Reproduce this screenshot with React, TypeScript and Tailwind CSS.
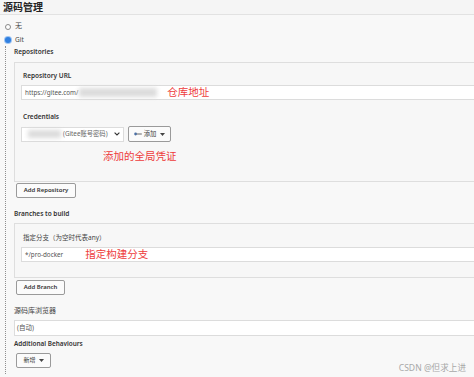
import React from "react";

function Chevron() {
  return (
    <svg width="6" height="4" viewBox="0 0 6 4" className="shrink-0">
      <path d="M0.6 0.6 L3 3 L5.4 0.6" fill="none" stroke="#333" strokeWidth="1.1" />
    </svg>
  );
}

function Caret() {
  return (
    <svg width="5" height="3" viewBox="0 0 5 3" className="shrink-0">
      <path d="M0 0 L5 0 L2.5 3 Z" fill="#444" />
    </svg>
  );
}

function KeyIcon() {
  return (
    <svg width="8" height="4" viewBox="0 0 8 4" className="shrink-0">
      <circle cx="1.6" cy="2" r="1.4" fill="#4a6fa5" />
      <rect x="2.6" y="1.5" width="5.2" height="1" fill="#666" />
    </svg>
  );
}

function Label({ children, mt }: { children: React.ReactNode; mt: string }) {
  return (
    <div className={`h-[12px] flex items-center text-[6.5px] font-semibold text-[#333] ${mt}`}>
      {children}
    </div>
  );
}

function Btn({ children, w, mt }: { children: React.ReactNode; w: string; mt: string }) {
  return (
    <div
      className={`ml-[2px] h-[15px] ${w} ${mt} flex items-center justify-center gap-[3px] rounded-[2px] border border-[#9a9a9a] bg-[#fbfbfb] text-[6px] font-semibold text-[#333]`}
    >
      {children}
    </div>
  );
}

export default function App() {
  return (
    <div className="relative w-[474px] h-[377px] overflow-hidden bg-[#f8f8f8] font-[Noto_Sans,Noto_Sans_CJK_SC,sans-serif]">
      {/* header */}
      <div className="h-[15px] border-b border-[#e2e2e2] bg-[#f5f5f5] pl-[3px] flex items-center">
        <span className="text-[10px] font-bold text-[#222] leading-none">源码管理</span>
      </div>

      {/* radios */}
      <div className="pt-[5px]">
        <div className="h-[13px] flex items-center pl-[5px] gap-[4px]">
          <span className="w-[6px] h-[6px] rounded-full border border-[#8a8a8a] bg-white" />
          <span className="text-[7px] text-[#444]">无</span>
        </div>
        <div className="h-[13px] flex items-center pl-[5px] gap-[4px]">
          <span className="w-[6px] h-[6px] rounded-full bg-[#2f7fe0] ring-1 ring-[#9cc3f2]" />
          <span className="text-[6.5px] text-[#444]">Git</span>
        </div>
      </div>

      {/* git section */}
      <div className="ml-[5px] border-l border-dotted border-[#8f8f8f] pl-[8px] pb-[6px]">
        <Label mt="mt-0">Repositories</Label>

        {/* repository panel */}
        <div className="mt-[4px] border border-r-0 border-[#dedede] bg-[#f7f7f7] pl-[6px] pb-[18px]">
          <div className="pl-[2px]">
            <Label mt="mt-[7px]">Repository URL</Label>
          </div>
          <div className="mt-[3px] h-[15px] border border-r-0 border-[#dcdcdc] bg-white flex items-center pl-[3px]">
            <span className="text-[6.3px] text-[#555]">https://gitee.com/</span>
            <span className="ml-[1px] w-[78px] h-[9px] bg-[#dcdcdc] blur-[2px]" />
            <span className="ml-[10px] text-[10.5px] text-[#ee3b3b] leading-none">仓库地址</span>
          </div>

          <div className="pl-[2px]">
            <Label mt="mt-[11px]">Credentials</Label>
          </div>
          <div className="mt-[3px] flex items-center gap-[4px]">
            <div className="w-[103px] h-[15px] border border-[#dcdcdc] bg-white flex items-center pl-[6px] pr-[3px]">
              <span className="w-[33px] h-[8px] bg-[#dcdcdc] blur-[2px]" />
              <span className="ml-[2px] text-[6.3px] text-[#666] whitespace-nowrap">(Gitee账号密码)</span>
              <span className="ml-auto">
                <Chevron />
              </span>
            </div>
            <div className="w-[43px] h-[16px] rounded-[2px] border border-[#9a9a9a] bg-[#fbfbfb] flex items-center justify-center gap-[2px]">
              <KeyIcon />
              <span className="text-[6.3px] text-[#444]">添加</span>
              <span className="ml-[2px]">
                <Caret />
              </span>
            </div>
          </div>
          <div className="mt-[7px] h-[14px] flex items-center pl-[82px]">
            <span className="text-[10.5px] text-[#ee3b3b] leading-none">添加的全局凭证</span>
          </div>
        </div>

        <Btn w="w-[60px]" mt="mt-[1px]">Add Repository</Btn>

        <Label mt="mt-[10px]">Branches to build</Label>

        {/* branch panel */}
        <div className="mt-[3px] border border-r-0 border-[#dedede] bg-[#f7f7f7] pl-[6px] pb-[15px]">
          <div className="pl-[2px]">
            <div className="mt-[8px] h-[12px] flex items-center text-[6.5px] text-[#444]">
              指定分支（为空时代表any）
            </div>
          </div>
          <div className="mt-[3px] h-[15px] border border-r-0 border-[#dcdcdc] bg-white flex items-center pl-[3px]">
            <span className="text-[6.3px] text-[#555]">*/pro-docker</span>
            <span className="ml-[22px] text-[10.5px] text-[#ee3b3b] leading-none">指定构建分支</span>
          </div>
        </div>

        <Btn w="w-[49px]" mt="mt-[2px]">Add Branch</Btn>

        <div className="mt-[10px] h-[12px] flex items-center text-[7px] text-[#444]">源码库浏览器</div>
        <div className="mt-[3px] h-[16px] border border-r-0 border-[#dcdcdc] bg-white flex items-center pl-[2px]">
          <span className="text-[6.5px] text-[#555]">(自动)</span>
        </div>

        <div className="mt-[3px] h-[10px] flex items-center text-[6.4px] font-semibold text-[#333]">
          Additional Behaviours
        </div>
        <Btn w="w-[35px]" mt="mt-[4px]">
          <span className="font-normal">新增</span>
          <Caret />
        </Btn>
      </div>

      <div className="absolute right-[8px] bottom-[4px] text-[8.6px] text-[#a8a8a8] leading-none">
        CSDN @但求上进
      </div>
    </div>
  );
}
